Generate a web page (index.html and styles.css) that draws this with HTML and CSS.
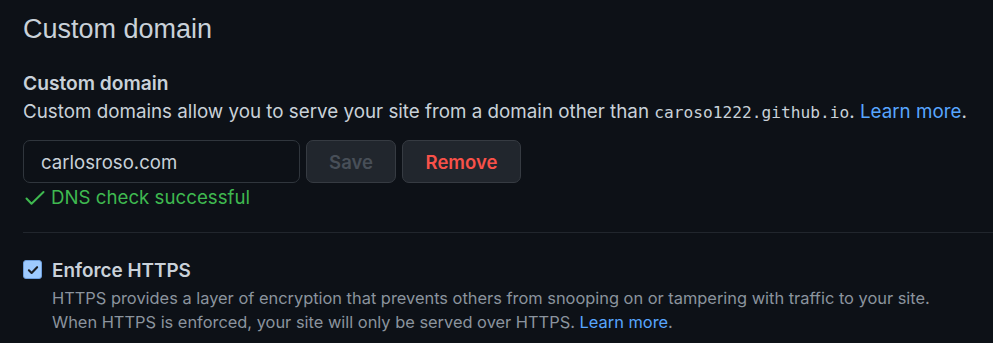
FILE: index.html
```html
<!DOCTYPE html>
<html lang="en">
<head>
<meta charset="utf-8">
<title>Custom domain</title>
<link rel="stylesheet" href="styles.css">
</head>
<body>
<div class="page">
  <h2 class="title">Custom domain</h2>
  <section class="domain">
    <h3 class="label">Custom domain</h3>
    <p class="note">Custom domains allow you to serve your site from a domain other than <code class="mono">caroso1222.github.io</code>. <a class="link" href="#">Learn more</a>.</p>
    <form class="row">
      <input class="field" type="text" value="carlosroso.com">
      <button class="btn btn-save" type="button" disabled>Save</button>
      <button class="btn btn-remove" type="button">Remove</button>
    </form>
    <div class="status">
      <svg class="check" viewBox="0 0 20 17" width="20" height="17"><path d="M1.5 8.5 6.5 13.8 18.5 2" fill="none" stroke="#3fb950" stroke-width="2" stroke-linecap="round" stroke-linejoin="round"/></svg>
      <span>DNS check successful</span>
    </div>
  </section>
  <hr class="divider">
  <section class="https">
    <span class="box"><svg viewBox="0 0 16 16" width="14" height="14"><path d="M3.3 8.4 6.4 11.4 12.7 4.8" fill="none" stroke="#1b1f24" stroke-width="2.4" stroke-linecap="round" stroke-linejoin="round"/></svg></span>
    <div class="https-text">
      <div class="https-label">Enforce HTTPS</div>
      <p class="desc">HTTPS provides a layer of encryption that prevents others from snooping on or tampering with traffic to your site.<br>When HTTPS is enforced, your site will only be served over HTTPS. <a class="link" href="#">Learn more</a>.</p>
    </div>
  </section>
</div>
</body>
</html>
```
FILE: styles.css
```css
html, body {
  margin: 0;
  background: #0d1117;
}
body {
  font-family: Inter, "Liberation Sans", Arial, sans-serif;
  color: #c9d1d9;
}
.page {
  padding: 12px 0 0 23px;
}
.title {
  margin: 0;
  font-family: "Liberation Sans", Arial, sans-serif;
  font-size: 27px;
  font-weight: 400;
  line-height: 34px;
  color: #c9d1d9;
}
.domain {
  padding-top: 25px;
}
.label {
  margin: 0;
  font-size: 19.2px;
  font-weight: 600;
  line-height: 24px;
  color: #c9d1d9;
}
.note {
  margin: 5px 0 0;
  font-size: 18.8px;
  line-height: 24px;
}
.mono {
  font-family: "DejaVu Sans Mono", "Liberation Mono", monospace;
  font-size: 16.2px;
}
.link {
  color: #58a6ff;
  text-decoration: none;
}
.row {
  display: flex;
  gap: 6px;
  margin: 15px 0 0;
}
.field {
  box-sizing: border-box;
  width: 277px;
  height: 43px;
  padding: 0 17px;
  border: 1px solid #30363d;
  border-radius: 7px;
  background: #0d1117;
  color: #c9d1d9;
  font: 18.6px Inter, "Liberation Sans", Arial, sans-serif;
  outline: none;
}
.btn {
  box-sizing: border-box;
  height: 43px;
  border: 1px solid #363b42;
  border-radius: 7px;
  background: #21262d;
  font: 600 18.5px Inter, "Liberation Sans", Arial, sans-serif;
}
.btn-save {
  width: 90px;
  color: #484f58;
}
.btn-remove {
  width: 119px;
  color: #f85149;
}
.status {
  display: flex;
  align-items: center;
  gap: 6px;
  margin-top: 3px;
  padding-left: 2px;
  font-size: 18.7px;
  line-height: 24px;
  color: #3fb950;
}
.divider {
  margin: 22px 0 0;
  border: 0;
  border-top: 1px solid #21262d;
}
.https {
  display: flex;
  gap: 10px;
  padding-top: 26px;
}
.box {
  box-sizing: border-box;
  flex: none;
  width: 19px;
  height: 19px;
  margin-top: 1px;
  display: flex;
  align-items: center;
  justify-content: center;
  background: #9ecbff;
  border: 1px solid #6e9fdc;
  border-radius: 3px;
}
.https-label {
  font-size: 18.9px;
  font-weight: 600;
  line-height: 24px;
  color: #c9d1d9;
}
.desc {
  margin: 3px 0 0;
  font-size: 16.4px;
  line-height: 24px;
  color: #8b949e;
}
```
